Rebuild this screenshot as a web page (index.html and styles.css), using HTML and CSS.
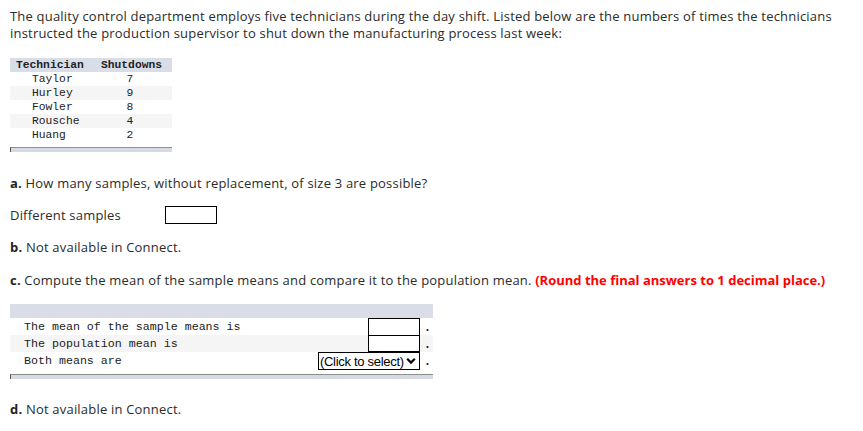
FILE: index.html
```html
<!DOCTYPE html>
<html>
<head>
<meta charset="utf-8">
<link rel="stylesheet" href="styles.css">
</head>
<body>
<div class="page">
  <p class="intro">The quality control department employs five technicians during the day shift. Listed below are the numbers of times the technicians instructed the production supervisor to shut down the manufacturing process last week:</p>

  <div class="data-wrap">
    <table class="data">
      <thead>
        <tr><th class="c1">Technician</th><th class="c2">Shutdowns</th></tr>
      </thead>
      <tbody>
        <tr><td class="name">Taylor</td><td class="num">7</td></tr>
        <tr class="alt"><td class="name">Hurley</td><td class="num">9</td></tr>
        <tr><td class="name">Fowler</td><td class="num">8</td></tr>
        <tr class="alt"><td class="name">Rousche</td><td class="num">4</td></tr>
        <tr><td class="name">Huang</td><td class="num">2</td></tr>
      </tbody>
    </table>
    <div class="bar"></div>
  </div>

  <p class="q q-a"><b>a.</b> How many samples, without replacement, of size 3 are possible?</p>
  <div class="answer-row"><span class="label">Different samples</span><span class="box box-a"></span></div>
  <p class="q q-b"><b>b.</b> Not available in Connect.</p>
  <p class="q q-c"><b>c.</b> Compute the mean of the sample means and compare it to the population mean. <span class="red">(Round the final answers to 1 decimal place.)</span></p>

  <div class="calc-wrap">
    <div class="calc-head"></div>
    <div class="calc-row">
      <span class="calc-text">The mean of the sample means is</span>
      <span class="box box-num"></span>
      <span class="dot">.</span>
    </div>
    <div class="calc-row alt">
      <span class="calc-text">The population mean is</span>
      <span class="box box-num box-joined"></span>
      <span class="dot">.</span>
    </div>
    <div class="calc-row">
      <span class="calc-text">Both means are</span>
      <span class="select">(Click to select)<svg class="chev" viewBox="0 0 10 8" width="10" height="8"><path d="M1.2 1.8 L5 5.6 L8.8 1.8" fill="none" stroke="#000" stroke-width="2.2"/></svg></span>
      <span class="dot">.</span>
    </div>
    <div class="bar bar-wide"></div>
  </div>

  <p class="q q-d"><b>d.</b> Not available in Connect.</p>
</div>
</body>
</html>
```

FILE: styles.css
```css
html, body {
  margin: 0;
  padding: 0;
  background: #fff;
}
.page {
  padding: 0 0 0 10px;
  font-family: "Open Sans", "Liberation Sans", sans-serif;
  font-size: 13px;
  letter-spacing: 0.2px;
  color: #2b2b2b;
}
p { margin: 0; }
.intro {
  padding-top: 8px;
  line-height: 17px;
  width: 845px;
}
.data-wrap {
  margin-top: 16px;
  width: 162px;
  letter-spacing: 0;
}
.data {
  border-collapse: collapse;
  width: 162px;
  font-family: "Liberation Mono", "Courier New", monospace;
  font-size: 11.3px;
  color: #222;
}
.data th, .data td {
  padding: 0;
  height: 14px;
  line-height: 14px;
}
.data thead tr { background: #d9dde7; }
.data th.c1 { text-align: left; padding-left: 6px; width: 80px; }
.data th.c2 { text-align: left; padding-left: 5px; }
.data td.name { padding-left: 22px; }
.data td.num { text-align: center; padding-right: 8px; }
.data tr.alt { background: #f5f5f5; }
.bar {
  margin-top: 5px;
  height: 4px;
  background: #d6dae3;
  border-top: 1px solid #8f8f8f;
  border-left: 1px solid #555;
}
.q { line-height: 17px; }
.q b { font-weight: 700; color: #222; }
.q-a { margin-top: 23px; }
.answer-row {
  display: flex;
  align-items: center;
  margin-top: 14px;
  height: 18px;
}
.label { width: 155px; }
.box {
  display: inline-block;
  box-sizing: border-box;
  border: 1px solid #000;
  background: #fff;
}
.box-a { width: 52px; height: 18px; }
.q-b { margin-top: 15px; }
.q-c { margin-top: 16px; }
.red { color: #f00; font-weight: 700; letter-spacing: 0; }
.calc-wrap {
  margin-top: 15px;
  width: 423px;
  font-family: "Liberation Mono", "Courier New", monospace;
  font-size: 11.65px;
  letter-spacing: 0;
  color: #222;
}
.calc-head {
  height: 14px;
  background: #d9dde7;
}
.calc-row {
  display: flex;
  align-items: center;
  height: 17px;
}
.calc-row.alt { background: #f5f5f5; }
.calc-text {
  flex: 1;
  padding-left: 14px;
}
.box-num { width: 52px; height: 18px; }
.box-joined { margin-top: -1px; height: 17px; }
.select {
  box-sizing: border-box;
  width: 102px;
  height: 18px;
  margin-top: 1px;
  border: 1px solid #000;
  background: #fff;
  font-family: "Liberation Sans", Arial, sans-serif;
  font-size: 13px;
  letter-spacing: -0.3px;
  color: #000;
  display: flex;
  align-items: center;
  padding-left: 1px;
  gap: 2px;
  white-space: nowrap;
}
.chev { flex: none; }
.dot {
  width: 13px;
  text-align: center;
  font-family: "Liberation Sans", Arial, sans-serif;
  font-size: 12px;
  font-weight: 700;
  padding-left: 2px;
  box-sizing: border-box;
}
.bar-wide { margin-top: 5px; }
.q-d { margin-top: 22px; }
```
